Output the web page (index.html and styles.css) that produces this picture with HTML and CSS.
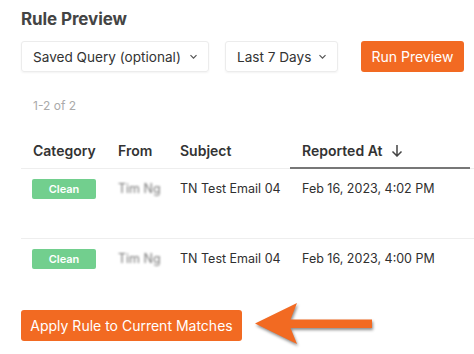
FILE: index.html
```html
<!DOCTYPE html>
<html>
<head>
<meta charset="utf-8">
<link rel="stylesheet" href="styles.css">
</head>
<body>
<div class="page">
  <h1 class="title">Rule Preview</h1>
  <div class="controls">
    <div class="select sel-query"><span>Saved Query (optional)</span>
      <svg class="chev" width="9" height="6" viewBox="0 0 9 6"><path d="M1.5 1.2l3 3 3-3" fill="none" stroke="#555" stroke-width="1.2"/></svg>
    </div>
    <div class="select sel-range"><span>Last 7 Days</span>
      <svg class="chev" width="9" height="6" viewBox="0 0 9 6"><path d="M1.5 1.2l3 3 3-3" fill="none" stroke="#555" stroke-width="1.2"/></svg>
    </div>
    <button class="btn btn-run">Run Preview</button>
  </div>
  <div class="count">1-2 of 2</div>
  <div class="table">
    <div class="row head">
      <div class="cell">Category</div>
      <div class="cell">From</div>
      <div class="cell">Subject</div>
      <div class="cell sorted">Reported At
        <svg class="sort" width="12" height="13" viewBox="0 0 12 13"><path d="M6 1v11M1.5 7.5L6 12l4.5-4.5" fill="none" stroke="#444" stroke-width="1.5"/></svg>
      </div>
      <div class="cell"></div>
    </div>
    <div class="row body">
      <div class="cell"><span class="badge">Clean</span></div>
      <div class="cell"><span class="blur">Tim Ng</span></div>
      <div class="cell">TN Test Email 04</div>
      <div class="cell">Feb 16, 2023, 4:02 PM</div>
      <div class="cell"></div>
    </div>
    <div class="row body last">
      <div class="cell"><span class="badge">Clean</span></div>
      <div class="cell"><span class="blur">Tim Ng</span></div>
      <div class="cell">TN Test Email 04</div>
      <div class="cell">Feb 16, 2023, 4:00 PM</div>
      <div class="cell"></div>
    </div>
  </div>
  <div class="apply-row">
    <button class="btn btn-apply">Apply Rule to Current Matches</button>
    <svg class="arrow" width="126" height="50" viewBox="0 0 126 50">
      <path d="M4 24.5L46 4L39.5 20.5H121V29H39.5L46 45Z" fill="#f26a22"/>
    </svg>
  </div>
</div>
</body>
</html>
```
FILE: styles.css
```css
html, body {
  margin: 0;
  padding: 0;
  background: #fff;
  overflow: hidden;
}
body {
  width: 474px;
  height: 354px;
  font-family: Inter, "Noto Sans", "Liberation Sans", sans-serif;
  color: #333;
}
.page {
  padding: 9px 0 0 21px;
  display: flex;
  flex-direction: column;
}
.title {
  margin: 0;
  font-size: 17px;
  line-height: 20px;
  font-weight: 700;
  color: #444;
  letter-spacing: -0.1px;
}
.controls {
  margin-top: 12px;
  display: flex;
  align-items: center;
  height: 31px;
}
.select {
  box-sizing: border-box;
  height: 31px;
  border: 1px solid #ececec;
  border-radius: 3px;
  box-shadow: 0 1px 2px rgba(0,0,0,0.05);
  display: flex;
  align-items: center;
  padding-left: 11px;
  font-size: 13.6px;
  color: #333;
}
.sel-query { width: 188px; }
.sel-range { width: 113px; margin-left: 16px; }
.select span { flex: 0 0 auto; }
.chev { margin-left: auto; margin-right: 10px; }
.btn {
  border: none;
  background: #f26a22;
  color: #fff;
  font-family: Inter, "Noto Sans", "Liberation Sans", sans-serif;
  font-size: 14px;
  border-radius: 3px;
  padding: 0;
  cursor: pointer;
}
.btn-run {
  margin-left: 23px;
  width: 103px;
  height: 31px;
}
.count {
  margin-top: 26px;
  margin-left: 12px;
  font-size: 12px;
  line-height: 16px;
  color: #aaa;
}
.table {
  margin-top: 18px;
  width: 453px;
}
.row {
  display: grid;
  grid-template-columns: 85px 62px 122px 180px 1fr;
}
.row.head {
  height: 36px;
  border-bottom: 1px solid #eee;
  align-items: center;
  font-weight: 600;
  color: #333;
}
.row.head .cell { font-size: 14px; padding-top: 1px; }
.cell {
  padding-left: 12px;
  font-size: 12.5px;
  white-space: nowrap;
}
.row.head .cell.sorted {
  height: 36px;
  box-sizing: border-box;
  display: flex;
  align-items: center;
  border-bottom: 2px solid #777;
  margin-bottom: -1px;
}
.sort { margin-left: 9px; }
.row.body {
  border-bottom: 1px solid #eee;
  align-items: start;
  padding-top: 10px;
  box-sizing: border-box;
  height: 70px;
  color: #2f2f2f;
}
.row.body.last {
  border-bottom: none;
}
.row.body .cell {
  line-height: 20px;
}
.row.body .cell:first-child { padding-left: 11px; }
.badge {
  display: inline-block;
  width: 64px;
  height: 20px;
  line-height: 20px;
  text-align: center;
  background: #72cf8e;
  color: #fff;
  font-size: 11px;
  font-weight: 600;
  border-radius: 2px;
}
.blur {
  color: #777;
  filter: blur(1.3px);
  font-size: 12.5px;
}
.apply-row {
  display: flex;
  align-items: flex-start;
  margin-top: 1px;
}
.btn-apply {
  width: 221px;
  height: 31px;
}
.arrow {
  margin-left: 9px;
  margin-top: -11px;
  filter: drop-shadow(1px 2px 1.5px rgba(0,0,0,0.45));
}
```
